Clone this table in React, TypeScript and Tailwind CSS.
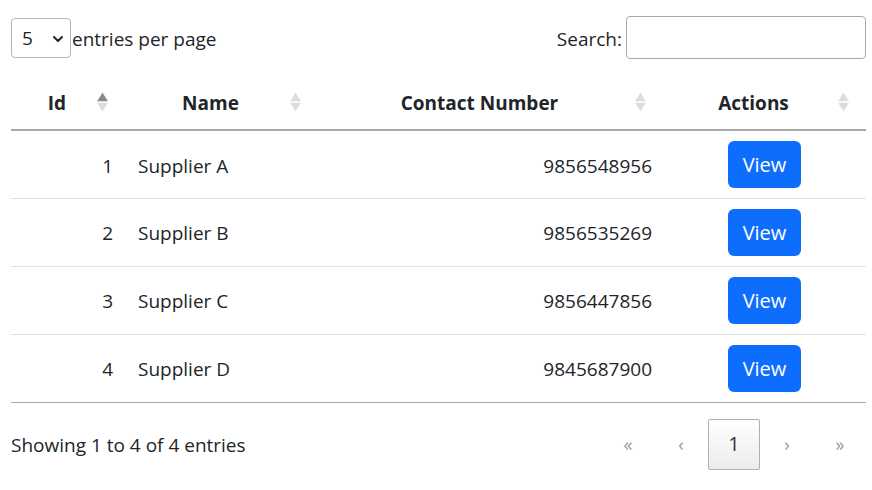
import { ChevronDown } from 'lucide-react';

interface Supplier {
  id: number;
  name: string;
  contact: string;
}

const suppliers: Supplier[] = [
  { id: 1, name: 'Supplier A', contact: '9856548956' },
  { id: 2, name: 'Supplier B', contact: '9856535269' },
  { id: 3, name: 'Supplier C', contact: '9856447856' },
  { id: 4, name: 'Supplier D', contact: '9845687900' },
];

// DataTables style sort arrows: up + down triangles stacked
function SortIcon({ active = false }: { active?: boolean }) {
  return (
    <span className="absolute right-[17px] top-1/2 -translate-y-1/2 flex flex-col items-center gap-[1px]">
      <svg width="11" height="9" viewBox="0 0 11 9">
        <path d="M5.5 0 L11 9 L0 9 Z" fill={active ? '#8a8a8a' : '#dcdcdc'} />
      </svg>
      <svg width="11" height="9" viewBox="0 0 11 9">
        <path d="M0 0 L11 0 L5.5 9 Z" fill="#dcdcdc" />
      </svg>
    </span>
  );
}

export default function App() {
  return (
    <div
      className="w-[872px] h-[490px] bg-white text-[#212529] text-[19px] pl-[11px] pr-[6px] pt-[16px]"
      style={{ fontFamily: '"Open Sans", "Noto Sans", sans-serif' }}
    >
      {/* Top controls */}
      <div className="flex items-center justify-between h-[43px]">
        <div className="flex items-center">
          <div className="flex items-center justify-between w-[60px] h-[40px] border border-[#b5b5b5] rounded-[4px] pl-[10px] pr-[4px] pt-[2px]">
            <span>5</span>
            <ChevronDown className="w-[16px] h-[16px] text-[#212529]" strokeWidth={3} />
          </div>
          <span className="ml-[1px] pt-[3px]">entries per page</span>
        </div>
        <div className="flex items-center">
          <span className="mr-[4px] pt-[3px]">Search:</span>
          <div className="w-[240px] h-[43px] border border-[#a9a9a9] rounded-[4px]" />
        </div>
      </div>

      {/* Table */}
      <table className="w-full table-fixed border-collapse mt-[16px]">
        <colgroup>
          <col className="w-[114px]" />
          <col className="w-[193px]" />
          <col className="w-[345px]" />
          <col className="w-[203px]" />
        </colgroup>
        <thead>
          <tr className="border-b-2 border-[#a8a8a8]">
            <th className="relative h-[55px] pl-[12px] pr-[34px] pt-[3px] text-center font-bold">
              Id
              <SortIcon active />
            </th>
            <th className="relative h-[55px] pl-[12px] pr-[34px] pt-[3px] text-center font-bold">
              Name
              <SortIcon />
            </th>
            <th className="relative h-[55px] pl-[12px] pr-[34px] pt-[3px] text-center font-bold">
              Contact Number
              <SortIcon />
            </th>
            <th className="relative h-[55px] pl-[12px] pr-[34px] pt-[3px] text-center font-bold">
              Actions
              <SortIcon />
            </th>
          </tr>
        </thead>
        <tbody>
          {suppliers.map((s, i) => (
            <tr
              key={s.id}
              className={
                i === suppliers.length - 1
                  ? 'border-b border-[#a8a8a8]'
                  : 'border-b border-[#dee2e6]'
              }
            >
              <td className="h-[68px] pr-[12px] pt-[3px] text-right">{s.id}</td>
              <td className="h-[68px] pl-[13px] pt-[3px] text-left">{s.name}</td>
              <td className="h-[68px] pr-[11px] pt-[3px] text-right">{s.contact}</td>
              <td className="h-[68px] px-[12px] text-center">
                <button className="h-[47px] px-[15px] pt-[2px] rounded-[6px] bg-[#0d6efd] text-white text-[20px]">
                  View
                </button>
              </td>
            </tr>
          ))}
        </tbody>
      </table>

      {/* Footer */}
      <div className="flex items-center justify-between mt-[16px] h-[51px]">
        <span className="pt-[3px]">Showing 1 to 4 of 4 entries</span>
        <div className="flex items-center gap-[1px] text-[#9a9a9a]">
          <span className="w-[52px] h-[51px] flex items-center justify-center text-[18px]">«</span>
          <span className="w-[52px] h-[51px] flex items-center justify-center text-[18px]">‹</span>
          <span className="w-[52px] h-[51px] flex items-center justify-center border border-[#b0b0b0] rounded-[2px] bg-gradient-to-b from-white to-[#ececec] text-[#333] text-[20px]">
            1
          </span>
          <span className="w-[52px] h-[51px] flex items-center justify-center text-[18px]">›</span>
          <span className="w-[52px] h-[51px] flex items-center justify-center text-[18px]">»</span>
        </div>
      </div>
    </div>
  );
}
